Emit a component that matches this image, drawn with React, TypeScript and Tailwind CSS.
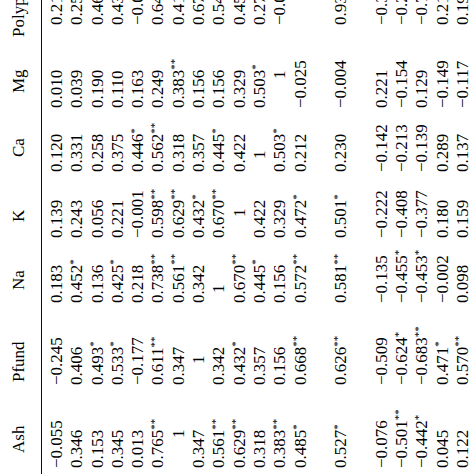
import React from 'react';

type Col = { label: string; cell: string; val: string; one: string; lab: string };

const cols: Col[] = [
  { label: 'Ash', cell: 'w-[80px]', val: 'pl-[6px]', one: 'pl-[36px]', lab: 'pl-[21px]' },
  { label: 'Pfund', cell: 'w-[82px]', val: 'pl-[9px]', one: 'pl-[30px]', lab: 'pl-[12px]' },
  { label: 'Na', cell: 'w-[68px]', val: 'pl-[9px]', one: 'pl-[19px]', lab: 'pl-[22px]' },
  { label: 'K', cell: 'w-[68px]', val: 'pl-[6px]', one: 'pl-[27px]', lab: 'pl-[22px]' },
  { label: 'Ca', cell: 'w-[64px]', val: 'pl-[4px]', one: 'pl-[17px]', lab: 'pl-[19px]' },
  { label: 'Mg', cell: 'w-[68px]', val: 'pl-[4px]', one: 'pl-[33px]', lab: 'pl-[19px]' },
  { label: 'Polyphenols', cell: 'w-[90px]', val: 'pl-[19px]', one: 'pl-[56px]', lab: 'pl-[7px]' },
];

const rows: (string[] | null)[] = [
  ['−0.055', '−0.245', '0.183', '0.139', '0.120', '0.010', '0.213'],
  ['0.346', '0.406', '0.452*', '0.243', '0.331', '0.039', '0.257'],
  ['0.153', '0.493*', '0.136', '0.056', '0.258', '0.190', '0.462*'],
  ['0.345', '0.533*', '0.425*', '0.221', '0.375', '0.110', '0.437*'],
  ['0.013', '−0.177', '0.218', '−0.001', '0.446*', '0.163', '−0.019'],
  ['0.765**', '0.611**', '0.738**', '0.598**', '0.562**', '0.249', '0.644**'],
  ['1', '0.347', '0.561**', '0.629**', '0.318', '0.383**', '0.418*'],
  ['0.347', '1', '0.342', '0.432*', '0.357', '0.156', '0.671**'],
  ['0.561**', '0.342', '1', '0.670**', '0.445*', '0.156', '0.541**'],
  ['0.629**', '0.432*', '0.670**', '1', '0.422', '0.329', '0.456*'],
  ['0.318', '0.357', '0.445*', '0.422', '1', '0.503*', '0.273'],
  ['0.383**', '0.156', '0.156', '0.329', '0.503*', '1', '−0.044'],
  ['0.485*', '0.668**', '0.572**', '0.472*', '0.212', '−0.025', '1'],
  null,
  ['0.527*', '0.626**', '0.581**', '0.501*', '0.230', '−0.004', '0.936**'],
  null,
  ['−0.076', '−0.509', '−0.135', '−0.222', '−0.142', '0.221', '−0.318'],
  ['−0.501**', '−0.624*', '−0.455*', '−0.408', '−0.213', '−0.154', '−0.252'],
  ['−0.442*', '−0.683**', '−0.453*', '−0.377', '−0.139', '0.129', '−0.706**'],
  ['0.045', '0.471*', '−0.002', '0.180', '0.289', '−0.149', '0.210'],
  ['0.122', '0.570**', '0.098', '0.159', '0.137', '−0.117', '0.198'],
];

function Value({ v }: { v: string }) {
  const m = v.match(/^([^*]*)(\**)$/);
  const num = m ? m[1] : v;
  const stars = m ? m[2] : '';
  return (
    <span className="whitespace-nowrap">
      {num}
      {stars && <sup className="text-[11px]">{stars}</sup>}
    </span>
  );
}

export default function App() {
  return (
    <div className="w-[474px] h-[474px] overflow-hidden bg-white">
      <div className="w-[520px] h-[474px] origin-top-left translate-y-[474px] -rotate-90 text-black text-[17px] font-['Liberation_Serif','Times_New_Roman',serif]">
        <div className="flex h-[42px] border-b-[1.5px] border-[#111] pt-[9px] leading-[20px]">
          {cols.map((c) => (
            <div key={c.label} className={`${c.cell} ${c.lab} shrink-0 whitespace-nowrap`}>
              {c.label}
            </div>
          ))}
        </div>
        <div className="pt-[5px]">
          {rows.map((r, i) =>
            r ? (
              <div key={i} className="flex h-[20.3px] leading-[20.3px]">
                {r.map((v, j) => (
                  <div key={j} className={`${cols[j].cell} ${v === '1' ? cols[j].one : cols[j].val} shrink-0`}>
                    <Value v={v} />
                  </div>
                ))}
              </div>
            ) : (
              <div key={i} className="h-[20.3px]" />
            )
          )}
        </div>
      </div>
    </div>
  );
}
